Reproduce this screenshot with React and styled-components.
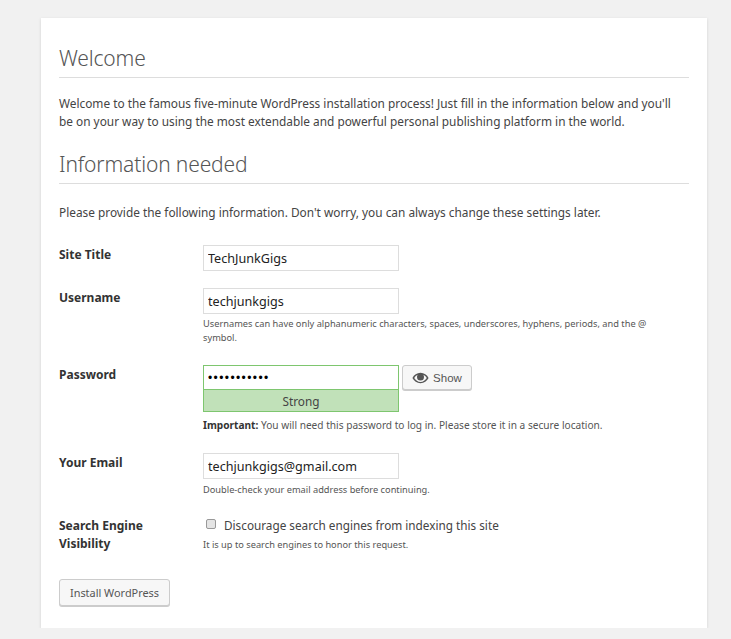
import React from "react";
import styled, {createGlobalStyle} from "styled-components";

const GlobalStyle = createGlobalStyle`
  html, body {
    margin: 0;
    background: #f1f1f1;
  }
  body {
    font-family: "Noto Sans", "Open Sans", sans-serif;
    color: #444;
  }
`;

const Card = styled.div`
  width: 630px;
  height: 574px;
  margin: 18px 0 0 41px;
  padding: 18px;
  background: #fff;
  box-shadow: 0 1px 3px rgba(0, 0, 0, 0.13);
`;

const Heading = styled.h1`
  margin: ${(props) => props.$top}px 0 0;
  height: 42px;
  padding-top: 8px;
  box-sizing: border-box;
  border-bottom: 1px solid #ddd;
  font-size: 21px;
  line-height: 29px;
  font-weight: 300;
  letter-spacing: -0.15px;
  color: #555;
`;

const Intro = styled.p`
  margin: ${(props) => props.$top}px 0 0;
  max-width: 622px;
  font-size: 11.85px;
  line-height: 18px;
  color: #444;
`;

const Form = styled.div`
  margin-top: 24px;
  display: flex;
  flex-direction: column;
`;

const Row = styled.div`
  display: grid;
  grid-template-columns: 144px 1fr;
  margin-bottom: ${(props) => props.$gap}px;
`;

const Label = styled.div`
  padding-top: 1px;
  font-size: 12px;
  line-height: 17.5px;
  font-weight: 700;
  color: #333;
`;

const Input = styled.input`
  display: block;
  box-sizing: border-box;
  width: 196px;
  height: 26px;
  padding: 1px 4px 0;
  border: 1px solid #ddd;
  border-radius: 0;
  outline: none;
  font-family: inherit;
  font-size: 12.6px;
  color: #222;
  background: #fff;
`;

const Hint = styled.p`
  margin: ${(props) => props.$top}px 0 0;
  max-width: 460px;
  font-size: ${(props) => props.$size || 9.25}px;
  line-height: 14px;
  color: #555;
`;

const Strong = styled.strong`
  font-weight: 700;
  color: #333;
`;

const PasswordLine = styled.div`
  display: flex;
  align-items: flex-start;
  gap: 3px;
`;

const PasswordBox = styled.div`
  width: 196px;
  box-sizing: border-box;
  border: 1px solid #7ec66f;
`;

const PasswordInput = styled(Input)`
  width: 100%;
  height: 24px;
  border: none;
  border-bottom: 1px solid #7ec66f;
  padding: 0 4px;
  font-family: "Liberation Sans", sans-serif;
  font-size: 12px;
  letter-spacing: 1.4px;
  color: #000;
`;

const Meter = styled.div`
  height: 21px;
  background: #c1e1b9;
  text-align: center;
  font-size: 11.8px;
  line-height: 22px;
  color: #444;
`;

const Button = styled.button`
  display: inline-flex;
  align-items: center;
  justify-content: center;
  gap: ${(props) => props.$gap || 0}px;
  box-sizing: border-box;
  width: ${(props) => props.$width}px;
  height: ${(props) => props.$height}px;
  padding: 0;
  background: #f7f7f7;
  border: 1px solid #ccc;
  border-radius: 3px;
  box-shadow: 0 1px 0 #ccc;
  font-family: ${(props) => props.$font || "inherit"};
  font-size: ${(props) => props.$size}px;
  color: #555;
`;

const CheckLine = styled.label`
  display: flex;
  align-items: center;
  gap: 8px;
  font-size: 11.75px;
  line-height: 18px;
  color: #444;
`;

const Check = styled.span`
  display: block;
  box-sizing: border-box;
  width: 10px;
  height: 10px;
  margin: 0 0 2px 3px;
  background: #e4e4e4;
  border: 1px solid #999;
  border-radius: 2px;
`;

const EyeIcon = () => (
  <svg width="17" height="12" viewBox="0 0 17 12">
    <path
      d="M8.5 0.8C5 0.8 2 2.9 0.4 6c1.6 3.1 4.6 5.2 8.1 5.2s6.5-2.1 8.1-5.2C15 2.9 12 .8 8.5.8zM8.5 9.9C5.9 9.9 3.6 8.4 2.2 6c.9-1.4 2.1-2.5 3.5-3.2-.4.6-.7 1.3-.7 2.1a3.5 3.5 0 0 0 7 0c0-.8-.3-1.5-.7-2.1 1.4.7 2.6 1.8 3.5 3.2-1.4 2.4-3.7 3.9-6.3 3.9z"
      fill="#555"
    />
  </svg>
);

const App = () => (
  <>
    <GlobalStyle/>
    <Card>
      <Heading $top={0}>Welcome</Heading>
      <Intro $top={16}>
        Welcome to the famous five-minute WordPress installation process! Just fill in the information below and you'll be on your way to using the most extendable and powerful personal publishing platform in the world.
      </Intro>
      <Heading $top={12}>Information needed</Heading>
      <Intro $top={19}>
        Please provide the following information. Don't worry, you can always change these settings later.
      </Intro>
      <Form>
        <Row $gap={17}>
          <Label>Site Title</Label>
          <Input defaultValue="TechJunkGigs"/>
        </Row>
        <Row $gap={20}>
          <Label>Username</Label>
          <div>
            <Input defaultValue="techjunkgigs"/>
            <Hint $top={3}>
              Usernames can have only alphanumeric characters, spaces, underscores, hyphens, periods, and the @ symbol.
            </Hint>
          </div>
        </Row>
        <Row $gap={21}>
          <Label>Password</Label>
          <div>
            <PasswordLine>
              <PasswordBox>
                <PasswordInput type="password" defaultValue="abcdefghijk"/>
                <Meter>Strong</Meter>
              </PasswordBox>
              <Button $width={70} $height={25} $gap={4} $size={11.5} $font={'"Liberation Sans", sans-serif'}>
                <EyeIcon/>
                Show
              </Button>
            </PasswordLine>
            <Hint $top={6} $size={10.15}>
              <Strong>Important:</Strong> You will need this password to log in. Please store it in a secure location.
            </Hint>
          </div>
        </Row>
        <Row $gap={19}>
          <Label>Your Email</Label>
          <div>
            <Input defaultValue="techjunkgigs@gmail.com"/>
            <Hint $top={4}>Double-check your email address before continuing.</Hint>
          </div>
        </Row>
        <Row $gap={27}>
          <Label>Search Engine<br/>Visibility</Label>
          <div>
            <CheckLine>
              <Check/>
              Discourage search engines from indexing this site
            </CheckLine>
            <Hint $top={4}>It is up to search engines to honor this request.</Hint>
          </div>
        </Row>
      </Form>
      <Button $width={111} $height={27} $size={10.9}>Install WordPress</Button>
    </Card>
  </>
);

export default App;
